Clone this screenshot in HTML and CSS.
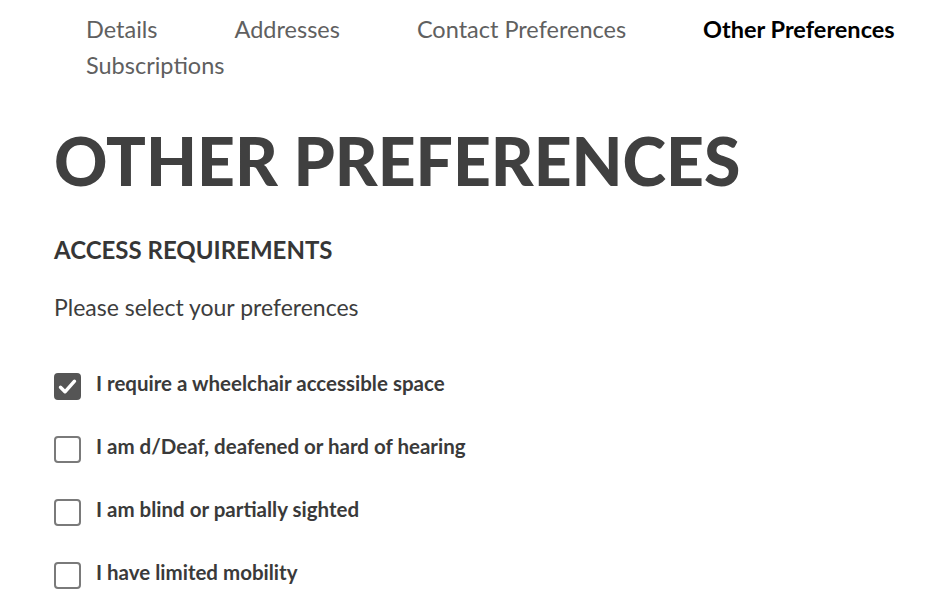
FILE: index.html
```html
<!DOCTYPE html>
<html lang="en">
<head>
<meta charset="utf-8">
<title>Other Preferences</title>
<link rel="stylesheet" href="styles.css">
</head>
<body>
<nav class="tabs">
  <ul class="tabs-list">
    <li class="tab">Details</li>
    <li class="tab">Addresses</li>
    <li class="tab">Contact Preferences</li>
    <li class="tab tab-active">Other Preferences</li>
    <li class="tab">Subscriptions</li>
  </ul>
</nav>
<main class="content">
  <h1 class="page-title">OTHER PREFERENCES</h1>
  <h2 class="section-title">ACCESS REQUIREMENTS</h2>
  <p class="intro">Please select your preferences</p>
  <ul class="options">
    <li class="option">
      <span class="box box-checked">
        <svg viewBox="0 0 27 27" width="27" height="27"><path d="M6.5 14.2 L11 18.8 L20.5 8.2" fill="none" stroke="#fff" stroke-width="3.4" stroke-linecap="round" stroke-linejoin="round"/></svg>
      </span>
      <span class="option-label">I require a wheelchair accessible space</span>
    </li>
    <li class="option">
      <span class="box"></span>
      <span class="option-label">I am d/Deaf, deafened or hard of hearing</span>
    </li>
    <li class="option">
      <span class="box"></span>
      <span class="option-label">I am blind or partially sighted</span>
    </li>
    <li class="option">
      <span class="box"></span>
      <span class="option-label">I have limited mobility</span>
    </li>
  </ul>
</main>
</body>
</html>
```
FILE: styles.css
```css
html, body {
  margin: 0;
  padding: 0;
  background: #ffffff;
}
body {
  font-family: Lato, "Noto Sans", sans-serif;
  color: #3d3d3d;
}
.tabs-list {
  list-style: none;
  margin: 0;
  padding: 11px 0 0 86px;
  display: flex;
  flex-wrap: wrap;
  column-gap: 77px;
}
.tab {
  font-size: 23.5px;
  line-height: 36px;
  color: #606060;
  white-space: nowrap;
}
.tab-active {
  color: #000000;
  font-weight: 700;
}
.content {
  padding: 0 0 0 54px;
}
.page-title {
  margin: 38px 0 0 0;
  font-size: 66px;
  line-height: 80px;
  font-weight: 900;
  letter-spacing: 0;
  color: #404040;
}
.section-title {
  margin: 34px 0 0 0;
  font-size: 24px;
  line-height: 30px;
  font-weight: 700;
  color: #363636;
}
.intro {
  margin: 27px 0 0 0;
  font-size: 23px;
  line-height: 30px;
  color: #3d3d3d;
}
.options {
  list-style: none;
  margin: 51px 0 0 0;
  padding: 0;
  display: flex;
  flex-direction: column;
  gap: 36px;
}
.option {
  display: flex;
  align-items: flex-start;
  gap: 15px;
}
.box {
  width: 27px;
  height: 27px;
  box-sizing: border-box;
  border: 2px solid #7a7a7a;
  border-radius: 4px;
  flex: none;
  display: flex;
}
.box-checked {
  background: #555555;
  border-color: #555555;
}
.box-checked svg {
  margin: -2px;
}
.option-label {
  font-size: 20.5px;
  line-height: 20px;
  font-weight: 700;
  color: #3a3a3a;
}
```
